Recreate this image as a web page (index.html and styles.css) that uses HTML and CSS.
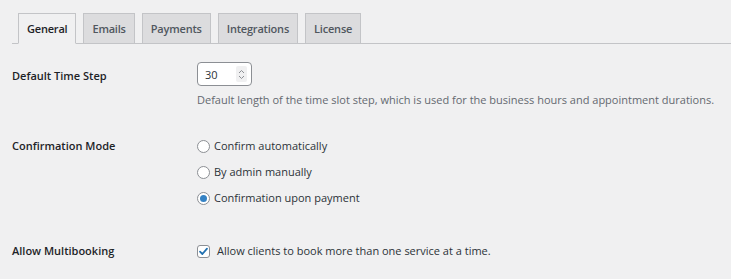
FILE: index.html
```html
<!DOCTYPE html>
<html>
<head>
<meta charset="utf-8">
<link rel="stylesheet" href="styles.css">
</head>
<body>
<div class="wrap">
  <nav class="tabs">
    <span class="tab active">General</span>
    <span class="tab">Emails</span>
    <span class="tab">Payments</span>
    <span class="tab">Integrations</span>
    <span class="tab">License</span>
  </nav>
  <div class="row row-step">
    <div class="label">Default Time Step</div>
    <div class="field">
      <div class="number">
        <span class="num-val">30</span>
        <span class="spin">
          <svg width="7" height="11" viewBox="0 0 7 11"><path d="M1 4 L3.5 1.5 L6 4" fill="none" stroke="#8c8f94" stroke-width="1"/><path d="M1 7 L3.5 9.5 L6 7" fill="none" stroke="#8c8f94" stroke-width="1"/></svg>
        </span>
      </div>
      <p class="desc">Default length of the time slot step, which is used for the business hours and appointment durations.</p>
    </div>
  </div>
  <div class="row row-mode">
    <div class="label">Confirmation Mode</div>
    <div class="field radios">
      <label class="opt"><span class="radio"></span>Confirm automatically</label>
      <label class="opt"><span class="radio"></span>By admin manually</label>
      <label class="opt"><span class="radio checked"></span>Confirmation upon payment</label>
    </div>
  </div>
  <div class="row row-multi">
    <div class="label">Allow Multibooking</div>
    <div class="field">
      <label class="opt"><span class="check"><svg width="11" height="11" viewBox="0 0 11 11"><path d="M2 5.6 L4.4 8 L9 2.6" fill="none" stroke="#2271b1" stroke-width="1.8" stroke-linecap="round" stroke-linejoin="round"/></svg></span>Allow clients to book more than one service at a time.</label>
    </div>
  </div>
</div>
</body>
</html>
```
FILE: styles.css
```css
html, body {
  margin: 0;
  padding: 0;
  background: #f0f0f1;
}
body {
  font-family: "Open Sans", "Noto Sans", sans-serif;
  font-size: 11px;
  color: #1d2327;
}
.wrap {
  padding-left: 12px;
  height: 279px;
  overflow: hidden;
}
.tabs {
  display: flex;
  padding-top: 13px;
  border-bottom: 1px solid #c3c4c7;
  padding-left: 6px;
}
.tab {
  box-sizing: border-box;
  height: 31px;
  line-height: 29px;
  padding: 0 8px;
  margin-right: 7px;
  margin-bottom: -1px;
  border: 1px solid #c3c4c7;
  background: #dcdcde;
  color: #50575e;
  font-weight: 600;
  font-size: 11px;
  letter-spacing: -0.2px;
}
.tab.active {
  background: #f0f0f1;
  color: #1d2327;
  border-bottom-color: #f0f0f1;
}
.row {
  display: flex;
}
.label {
  width: 185px;
  flex: none;
  font-weight: 600;
  font-size: 11px;
}
.row-step {
  margin-top: 18px;
}
.row-step .label {
  padding-top: 6px;
}
.number {
  box-sizing: border-box;
  width: 55px;
  height: 24px;
  border: 1px solid #8c8f94;
  border-radius: 4px;
  background: #fff;
  display: flex;
  align-items: center;
  justify-content: space-between;
  padding: 0 4px 0 7px;
}
.num-val {
  font-size: 11px;
  color: #2c3338;
}
.spin {
  display: flex;
  align-items: center;
  justify-content: center;
  width: 11px;
  height: 16px;
  background: #f0f0f1;
  border-radius: 2px;
}
.desc {
  margin: 6px 0 0;
  line-height: 16px;
  color: #646970;
  font-size: 11px;
}
.row-mode {
  margin-top: 30px;
}
.row-mode .label {
  line-height: 16px;
}
.radios {
  display: flex;
  flex-direction: column;
  gap: 10px;
}
.opt {
  display: flex;
  align-items: center;
  line-height: 16px;
  color: #2c3338;
}
.radio {
  box-sizing: border-box;
  width: 13px;
  height: 13px;
  border: 1px solid #8c8f94;
  border-radius: 50%;
  background: #fff;
  margin-right: 4px;
  display: flex;
  align-items: center;
  justify-content: center;
}
.radio.checked::after {
  content: "";
  width: 7px;
  height: 7px;
  border-radius: 50%;
  background: #3582c4;
}
.row-multi {
  margin-top: 37px;
}
.row-multi .label {
  line-height: 16px;
}
.check {
  box-sizing: border-box;
  width: 13px;
  height: 13px;
  border: 1px solid #8c8f94;
  border-radius: 3px;
  background: #fff;
  margin-right: 7px;
  display: flex;
  align-items: center;
  justify-content: center;
}
```
